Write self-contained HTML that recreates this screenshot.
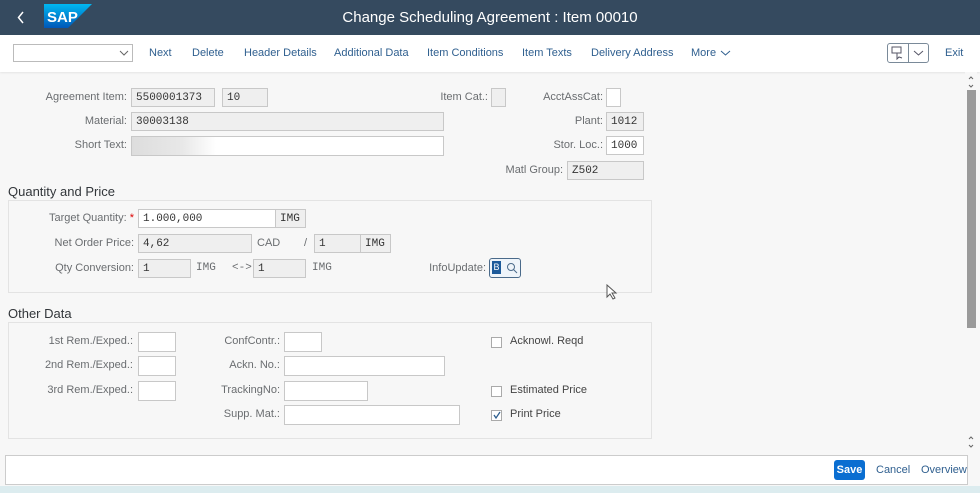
<!DOCTYPE html>
<html><head><meta charset="utf-8"><style>
*{margin:0;padding:0;box-sizing:border-box}
body{width:980px;height:493px;overflow:hidden;background:#f7f7f7;font-family:"Liberation Sans",sans-serif;position:relative}
div,span{position:absolute}
.hd{left:0;top:0;width:980px;height:35px;background:#354a5f}
.tb{left:0;top:35px;width:980px;height:37px;background:#fff;box-shadow:0 1px 2px rgba(0,0,0,.08)}
.lk{top:47px;font-size:11px;color:#2f5f8f;white-space:nowrap}
.lb{font-size:11px;color:#6a6d70;text-align:right;white-space:nowrap;line-height:19px}
.in{height:19px;border:1px solid #c8c8c8;background:#efefef;font-family:"Liberation Mono",monospace;font-size:11px;color:#333;padding-left:4px;display:flex;align-items:center;white-space:nowrap}
.w{background:#fff}
.tx{font-size:11px;color:#6a6d70;line-height:19px;white-space:nowrap}
.mo{font-family:"Liberation Mono",monospace}
.pn{border:1px solid #e3e3e3;background:#f7f7f7}
.sec{font-size:13px;color:#32363a}
.cb{width:11px;height:11px;border:1px solid #aaa;background:#fff}
</style></head><body>
<div class="hd">
 <svg style="position:absolute;left:17px;top:11px" width="8" height="13"><path d="M6 1 L1.5 6.5 L6 12" stroke="#fff" stroke-width="1.5" fill="none"/></svg>
 <svg style="position:absolute;left:44px;top:4px" width="48" height="24"><defs><linearGradient id="g" x1="0" y1="0" x2="0" y2="1"><stop offset="0" stop-color="#00b8f1"/><stop offset="1" stop-color="#0057b8"/></linearGradient></defs><polygon points="0,0 48,0 24,24 0,24" fill="url(#g)"/><text x="3" y="18" font-family="Liberation Sans" font-weight="bold" font-size="15" fill="#fff">SAP</text></svg>
 <div style="left:0;width:980px;top:9px;text-align:center;color:#fff;font-size:15px">Change Scheduling Agreement : Item 00010</div>
</div>
<div class="tb"></div>
<div class="in w" style="left:13px;top:44px;width:120px;height:18px;border-color:#bbb"></div>
<svg style="position:absolute;left:119px;top:50px" width="10" height="6"><path d="M1 1 L5 5 L9 1" stroke="#666" fill="none"/></svg>
<span class="lk" style="left:149px">Next</span>
<span class="lk" style="left:192px">Delete</span>
<span class="lk" style="left:244px">Header Details</span>
<span class="lk" style="left:334px">Additional Data</span>
<span class="lk" style="left:427px">Item Conditions</span>
<span class="lk" style="left:522px">Item Texts</span>
<span class="lk" style="left:591px">Delivery Address</span>
<span class="lk" style="left:691px">More</span>
<svg style="position:absolute;left:720px;top:50px" width="11" height="6"><path d="M1 1 L5.5 5 L10 1" stroke="#2f5f8f" fill="none"/></svg>
<div style="left:887px;top:43px;width:42px;height:20px;border:1px solid #7a8a99;border-radius:3px;background:#fff"></div>
<div style="left:908px;top:43px;width:1px;height:20px;background:#7a8a99"></div>
<svg style="position:absolute;left:891px;top:46px" width="14" height="14"><rect x="1" y="1" width="9" height="6" fill="none" stroke="#556"/><path d="M6 7 L6 13 L8 11 L11 12" stroke="#556" fill="none"/></svg>
<svg style="position:absolute;left:913px;top:50px" width="11" height="6"><path d="M1 1 L5.5 5 L10 1" stroke="#556" fill="none"/></svg>
<span class="lk" style="left:945px;font-size:11px">Exit</span>

<!-- scrollbar -->
<div style="left:965px;top:72px;width:12px;height:383px;background:#f7f7f7"></div>
<div style="left:967px;top:90px;width:9px;height:238px;background:#9a9a9a"></div>
<svg style="position:absolute;left:967px;top:74px" width="8" height="16"><path d="M2 5 L4 3 L6 5 M2 11 L4 13 L6 11" stroke="#666" fill="none"/></svg>
<svg style="position:absolute;left:967px;top:434px" width="8" height="16"><path d="M2 5 L4 3 L6 5 M2 11 L4 13 L6 11" stroke="#666" fill="none"/></svg>

<!-- header fields -->
<div class="lb" style="left:0;width:127px;top:88px">Agreement Item:</div>
<div class="in" style="left:131px;top:88px;width:84px">5500001373</div>
<div class="in" style="left:222px;top:88px;width:46px">10</div>
<div class="lb" style="left:400px;width:88px;top:88px">Item Cat.:</div>
<div class="in" style="left:491px;top:88px;width:15px"></div>
<div class="lb" style="left:500px;width:103px;top:88px">AcctAssCat:</div>
<div class="in w" style="left:606px;top:88px;width:15px"></div>
<div class="lb" style="left:0;width:127px;top:112px">Material:</div>
<div class="in" style="left:131px;top:112px;width:313px">30003138</div>
<div class="lb" style="left:500px;width:103px;top:112px">Plant:</div>
<div class="in" style="left:606px;top:112px;width:38px">1012</div>
<div class="lb" style="left:0;width:127px;top:136px">Short Text:</div>
<div class="in w" style="left:131px;top:136px;width:313px;height:20px"></div>
<div style="left:132px;top:137px;width:84px;height:18px;background:linear-gradient(90deg,#ddd,#e8e8e8 60%,#fff)"></div>
<div class="lb" style="left:500px;width:103px;top:136px">Stor. Loc.:</div>
<div class="in w" style="left:606px;top:136px;width:38px">1000</div>
<div class="lb" style="left:450px;width:113px;top:161px">Matl Group:</div>
<div class="in" style="left:567px;top:161px;width:77px">Z502</div>

<div class="sec" style="left:8px;top:184px">Quantity and Price</div>
<div class="pn" style="left:8px;top:200px;width:644px;height:93px"></div>
<div class="lb" style="left:0;width:134px;top:209px">Target Quantity: <span style="position:static;color:#d00">*</span></div>
<div class="in w" style="left:138px;top:209px;width:138px">1.000,000</div>
<div class="in" style="left:275px;top:209px;width:31px">IMG</div>
<div class="lb" style="left:0;width:134px;top:234px">Net Order Price:</div>
<div class="in" style="left:138px;top:234px;width:114px">4,62</div>
<div class="tx" style="left:257px;top:234px">CAD</div>
<div class="tx" style="left:304px;top:234px">/</div>
<div class="in" style="left:314px;top:234px;width:47px">1</div>
<div class="in" style="left:360px;top:234px;width:31px">IMG</div>
<div class="lb" style="left:0;width:134px;top:259px">Qty Conversion:</div>
<div class="in" style="left:138px;top:259px;width:53px">1</div>
<div class="tx mo" style="left:196px;top:259px">IMG</div>
<div class="tx mo" style="left:232px;top:259px">&lt;-&gt;</div>
<div class="in" style="left:253px;top:259px;width:53px">1</div>
<div class="tx mo" style="left:312px;top:259px">IMG</div>
<div class="lb" style="left:400px;width:86px;top:259px">InfoUpdate:</div>
<div style="left:489px;top:258px;width:32px;height:20px;border:1px solid #4a6a8a;border-radius:3px;background:#eef4fa"></div>
<div style="left:492px;top:261px;width:9px;height:13px;background:#1c5a9a;color:#fff;font-size:9px;text-align:center;line-height:13px">B</div>
<svg style="position:absolute;left:506px;top:261px" width="12" height="14"><circle cx="5" cy="6" r="3.5" stroke="#4a6a8a" fill="none"/><path d="M7.5 8.5 L11 12" stroke="#4a6a8a"/></svg>
<svg style="position:absolute;left:606px;top:284px" width="12" height="16"><path d="M1 1 L1 13 L4 10 L7 15 L9 14 L6 9 L10 9 Z" fill="#fff" stroke="#555"/></svg>

<div class="sec" style="left:8px;top:306px">Other Data</div>
<div class="pn" style="left:8px;top:322px;width:644px;height:117px"></div>
<div class="lb" style="left:0;width:133px;top:332px">1st Rem./Exped.:</div>
<div class="in w" style="left:138px;top:332px;width:38px;height:20px"></div>
<div class="lb" style="left:0;width:133px;top:356px">2nd Rem./Exped.:</div>
<div class="in w" style="left:138px;top:356px;width:38px;height:20px"></div>
<div class="lb" style="left:0;width:133px;top:381px">3rd Rem./Exped.:</div>
<div class="in w" style="left:138px;top:381px;width:38px;height:20px"></div>
<div class="lb" style="left:180px;width:100px;top:332px">ConfContr.:</div>
<div class="in w" style="left:284px;top:332px;width:38px;height:20px"></div>
<div class="lb" style="left:180px;width:100px;top:356px">Ackn. No.:</div>
<div class="in w" style="left:284px;top:356px;width:161px;height:20px"></div>
<div class="lb" style="left:180px;width:100px;top:381px">TrackingNo:</div>
<div class="in w" style="left:284px;top:381px;width:84px;height:20px"></div>
<div class="lb" style="left:180px;width:100px;top:405px">Supp. Mat.:</div>
<div class="in w" style="left:284px;top:405px;width:176px;height:20px"></div>
<div class="cb" style="left:491px;top:337px"></div>
<div class="tx" style="left:510px;top:332px;color:#444">Acknowl. Reqd</div>
<div class="cb" style="left:491px;top:386px"></div>
<div class="tx" style="left:510px;top:381px;color:#444">Estimated Price</div>
<div class="cb" style="left:491px;top:410px"></div>
<svg style="position:absolute;left:492px;top:410px" width="10" height="10"><path d="M2 5 L4 8 L8 2" stroke="#2f5f8f" fill="none" stroke-width="1.3"/></svg>
<div class="tx" style="left:510px;top:405px;color:#444">Print Price</div>

<div style="left:5px;top:455px;width:963px;height:30px;background:#fff;border:1px solid #ccc"></div>
<div style="left:834px;top:460px;width:31px;height:20px;background:#0a6ed1;border-radius:3px;color:#fff;font-size:11px;font-weight:bold;text-align:center;line-height:20px">Save</div>
<span class="lk" style="left:876px;top:464px">Cancel</span>
<span class="lk" style="left:921px;top:464px">Overview</span>
<div style="left:0;top:486px;width:980px;height:7px;background:#dcecef"></div>
</body></html>
